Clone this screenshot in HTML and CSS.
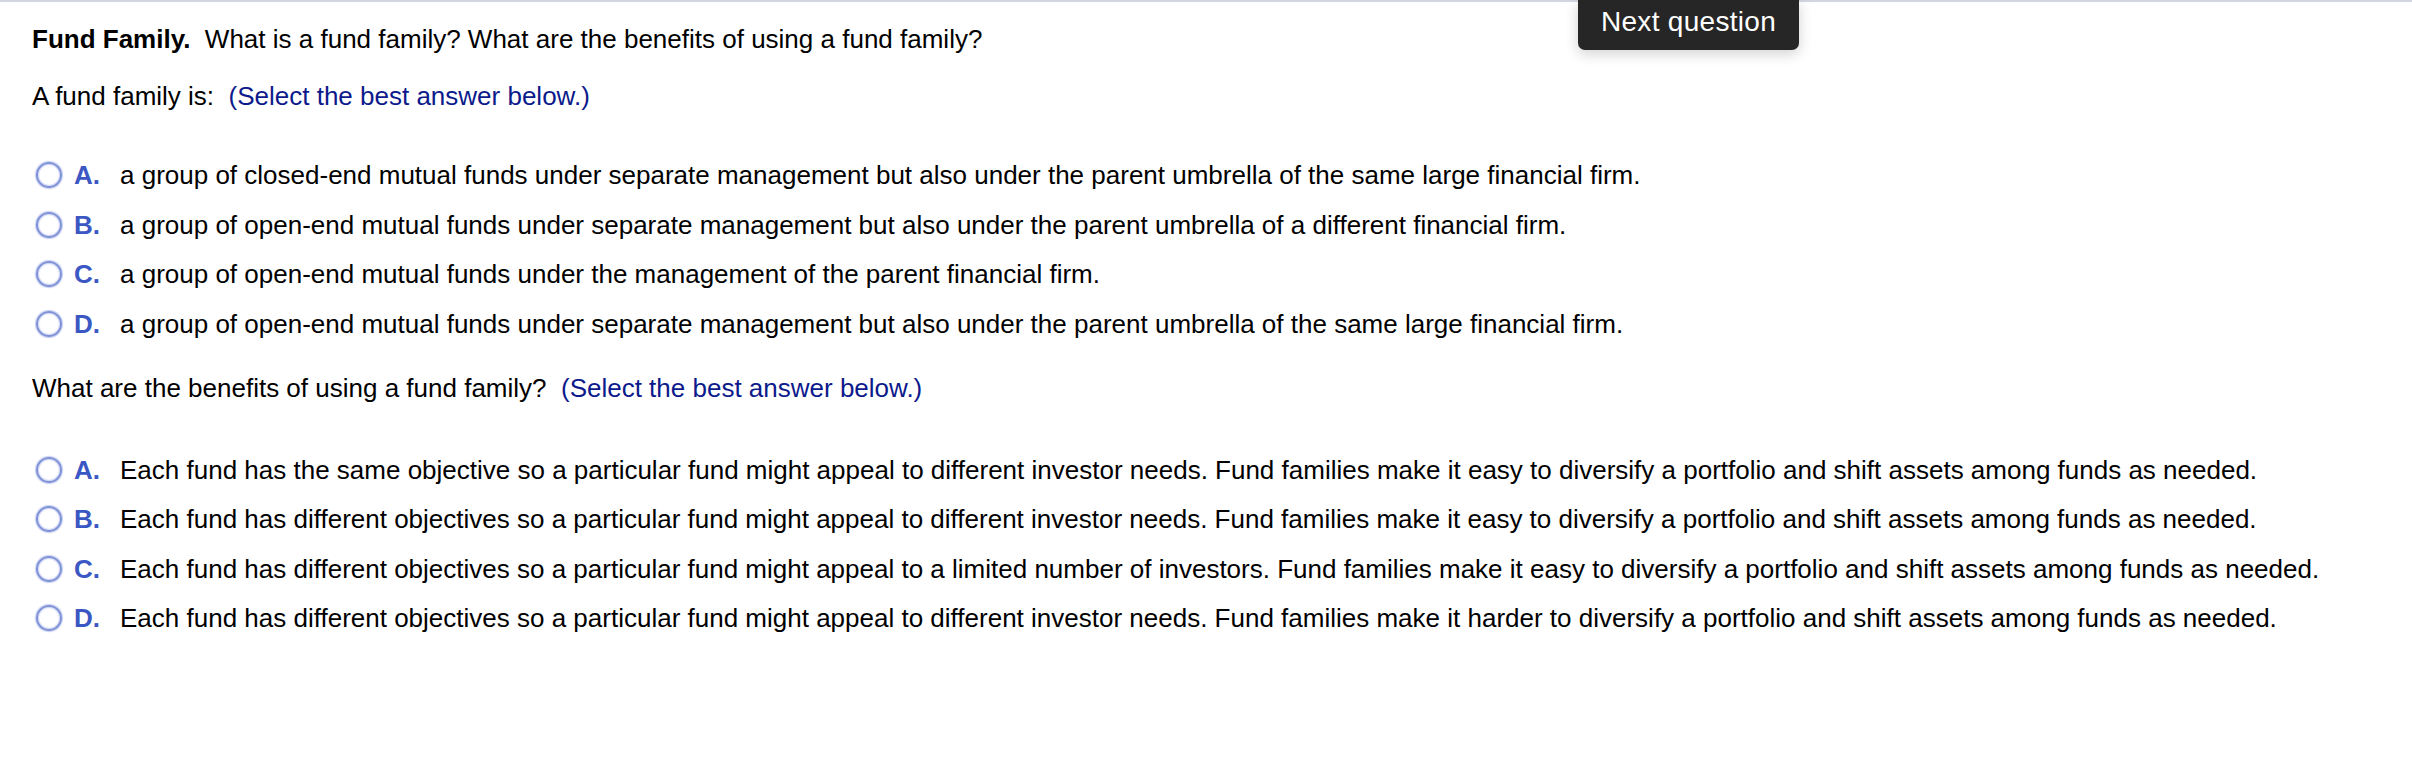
FILE: index.html
```html
<!DOCTYPE html>
<html>
<head>
<meta charset="utf-8">
<link rel="stylesheet" href="styles.css">
</head>
<body>
<div class="topline"></div>
<button class="next">Next question</button>
<main class="q">
  <p class="title"><b>Fund Family.</b>&nbsp; What is a fund family? What are the benefits of using a fund family?</p>
  <p class="prompt">A fund family is:&nbsp; <span class="hint">(Select the best answer below.)</span></p>
  <ul class="opts">
    <li class="opt"><span class="radio"></span><span class="lbl">A.</span><span class="txt">a group of closed-end mutual funds under separate management but also under the parent umbrella of the same large financial firm.</span></li>
    <li class="opt"><span class="radio"></span><span class="lbl">B.</span><span class="txt">a group of open-end mutual funds under separate management but also under the parent umbrella of a different financial firm.</span></li>
    <li class="opt"><span class="radio"></span><span class="lbl">C.</span><span class="txt">a group of open-end mutual funds under the management of the parent financial firm.</span></li>
    <li class="opt"><span class="radio"></span><span class="lbl">D.</span><span class="txt">a group of open-end mutual funds under separate management but also under the parent umbrella of the same large financial firm.</span></li>
  </ul>
  <p class="prompt second">What are the benefits of using a fund family?&nbsp; <span class="hint">(Select the best answer below.)</span></p>
  <ul class="opts second">
    <li class="opt"><span class="radio"></span><span class="lbl">A.</span><span class="txt">Each fund has the same objective so a particular fund might appeal to different investor needs. Fund families make it easy to diversify a portfolio and shift assets among funds as needed.</span></li>
    <li class="opt"><span class="radio"></span><span class="lbl">B.</span><span class="txt">Each fund has different objectives so a particular fund might appeal to different investor needs. Fund families make it easy to diversify a portfolio and shift assets among funds as needed.</span></li>
    <li class="opt"><span class="radio"></span><span class="lbl">C.</span><span class="txt">Each fund has different objectives so a particular fund might appeal to a limited number of investors. Fund families make it easy to diversify a portfolio and shift assets among funds as needed.</span></li>
    <li class="opt"><span class="radio"></span><span class="lbl">D.</span><span class="txt">Each fund has different objectives so a particular fund might appeal to different investor needs. Fund families make it harder to diversify a portfolio and shift assets among funds as needed.</span></li>
  </ul>
</main>
</body>
</html>
```
FILE: styles.css
```css
html, body {
  margin: 0;
  padding: 0;
  background: #fff;
}
body {
  font-family: "Liberation Sans", Arial, sans-serif;
  font-size: 26px;
  color: #000;
  position: relative;
  width: 2412px;
  height: 776px;
  overflow: hidden;
}
.topline {
  height: 2px;
  background: #d3d6e1;
}
.next {
  position: absolute;
  left: 1578px;
  top: 0;
  width: 221px;
  height: 50px;
  border: none;
  border-radius: 0 0 7px 7px;
  background: #262626;
  color: #fff;
  font-family: "Liberation Sans", Arial, sans-serif;
  font-size: 28px;
  letter-spacing: 0.3px;
  padding: 0 0 6px 0;
  box-shadow: 0 4px 14px rgba(0,0,0,0.18);
}
.q {
  padding: 0 32px;
}
p {
  margin: 0;
  line-height: 30px;
}
.title {
  margin-top: 22px;
}
.prompt {
  margin-top: 27px;
}
.prompt.second {
  margin-top: 34px;
}
.hint {
  color: #0c1a8c;
}
.opts {
  list-style: none;
  margin: 49px 0 0 0;
  padding: 0;
  display: flex;
  flex-direction: column;
  gap: 19.5px;
}
.opts.second {
  margin-top: 52px;
}
.opt {
  display: flex;
  align-items: center;
  line-height: 30px;
  white-space: nowrap;
}
.radio {
  width: 22px;
  height: 22px;
  border: 2px solid #7f92d9;
  border-radius: 50%;
  box-shadow: 0 0 1px 1px rgba(127,146,217,0.45), inset 0 0 1px 1px rgba(127,146,217,0.35);
  margin-left: 4px;
  flex: none;
}
.lbl {
  color: #3b57c4;
  font-weight: bold;
  margin-left: 12px;
  width: 46px;
  flex: none;
}
.txt {
  flex: none;
}
```
